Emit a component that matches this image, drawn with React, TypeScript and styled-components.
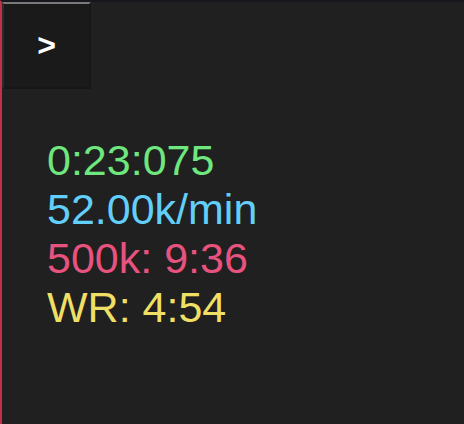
import React from "react";
import styled, { createGlobalStyle } from "styled-components";

const GlobalStyle = createGlobalStyle`
  html, body {
    margin: 0;
    padding: 0;
    background-color: #202020;
  }
`;

const Screen = styled.div`
  box-sizing: border-box;
  width: 464px;
  height: 424px;
  background-color: #202020;
  border-left: 2px solid #c0304a;
  border-top: 2px solid #16161d;
  font-family: "Liberation Sans", Arial, sans-serif;
  display: flex;
  flex-direction: column;
  align-items: flex-start;
`;

const ToggleButton = styled.button`
  box-sizing: border-box;
  width: 89px;
  height: 87px;
  padding: 0;
  background-color: #1a1a1a;
  color: #ffffff;
  font-family: "Liberation Sans", Arial, sans-serif;
  font-size: 32px;
  font-weight: 700;
  border-width: 2px;
  border-style: solid;
  border-color: #7a7a7a #171717 #171717 #2c2c2c;
  cursor: pointer;
  display: flex;
  justify-content: center;
  align-items: center;
`;

const Stats = styled.div`
  display: flex;
  flex-direction: column;
  padding-left: 45px;
  margin-top: 47px;
`;

const StatLine = styled.div<{ $color: string }>`
  font-size: 43px;
  line-height: 49px;
  color: ${(p) => p.$color};
  white-space: nowrap;
`;

const stats = [
  { text: "0:23:075", color: "#6fe77f" },
  { text: "52.00k/min", color: "#62cffa" },
  { text: "500k: 9:36", color: "#e8527f" },
  { text: "WR: 4:54", color: "#f0df65" },
];

const App = () => {
  return (
    <>
      <GlobalStyle />
      <Screen>
        <ToggleButton>&gt;</ToggleButton>
        <Stats>
          {stats.map((s) => (
            <StatLine key={s.text} $color={s.color}>
              {s.text}
            </StatLine>
          ))}
        </Stats>
      </Screen>
    </>
  );
};

export default App;
